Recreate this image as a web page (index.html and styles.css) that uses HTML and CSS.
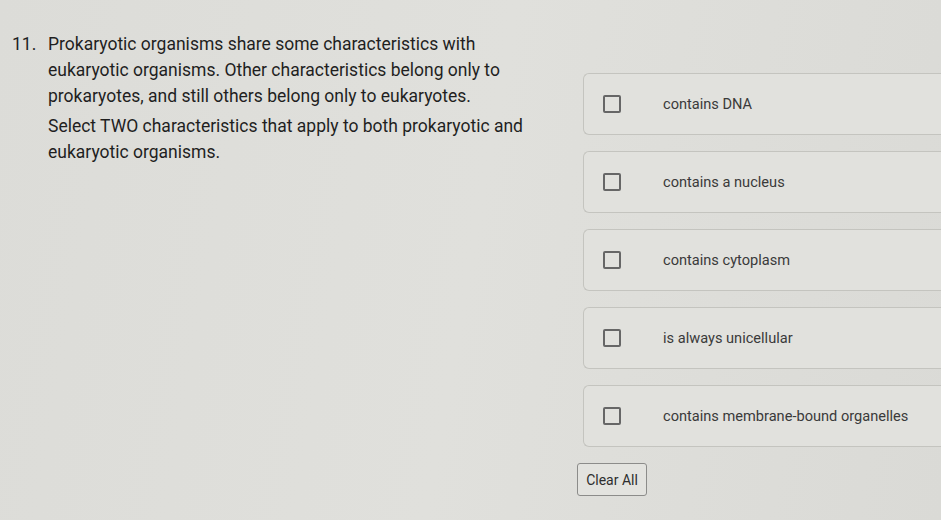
FILE: index.html
```html
<!DOCTYPE html>
<html>
<head>
<meta charset="utf-8">
<link rel="stylesheet" href="styles.css">
</head>
<body>
<div class="page">
  <div class="question">
    <div class="num">11.</div>
    <div class="qtext">
      <p class="para">Prokaryotic organisms share some characteristics with<br>eukaryotic organisms. Other characteristics belong only to<br>prokaryotes, and still others belong only to eukaryotes.</p>
      <p class="para second">Select TWO characteristics that apply to both prokaryotic and<br>eukaryotic organisms.</p>
    </div>
  </div>
  <div class="answers">
    <div class="option"><span class="box"></span><span class="label">contains DNA</span></div>
    <div class="option"><span class="box"></span><span class="label">contains a nucleus</span></div>
    <div class="option"><span class="box"></span><span class="label">contains cytoplasm</span></div>
    <div class="option"><span class="box"></span><span class="label">is always unicellular</span></div>
    <div class="option"><span class="box"></span><span class="label">contains membrane-bound organelles</span></div>
    <div class="actions"><button class="clear">Clear All</button></div>
  </div>
</div>
</body>
</html>
```
FILE: styles.css
```css
html, body {
  margin: 0;
  padding: 0;
  width: 941px;
  height: 520px;
  overflow: hidden;
}
body {
  background: linear-gradient(100deg, #dcdcd8 0%, #e0e0dc 50%, #dadad6 100%);
  font-family: Roboto, "Liberation Sans", sans-serif;
  color: #1f1f1f;
}
.page {
  display: flex;
  padding-left: 12px;
}
.question {
  display: flex;
  width: 571px;
  padding-top: 31px;
  font-size: 17.5px;
  line-height: 26px;
  flex-shrink: 0;
}
.num {
  width: 36px;
}
.para {
  margin: 0;
}
.second {
  margin-top: 4px;
}
.answers {
  padding-top: 73px;
  display: flex;
  flex-direction: column;
  gap: 16px;
  width: 358px;
  flex-shrink: 0;
}
.option {
  height: 62px;
  box-sizing: border-box;
  border: 1px solid #c4c4bf;
  border-right: none;
  border-radius: 6px 0 0 6px;
  background: #e1e1dd;
  display: flex;
  align-items: center;
  padding-left: 19px;
  font-size: 14.6px;
  color: #3a3a3a;
}
.box {
  width: 18px;
  height: 18px;
  box-sizing: border-box;
  border: 2px solid #666;
  border-radius: 2px;
  margin-right: 42px;
  flex-shrink: 0;
}
.actions {
  display: flex;
}
.clear {
  width: 70px;
  height: 33px;
  border: 1px solid #8c8c8a;
  border-radius: 3px;
  background: #e3e3df;
  font-family: Roboto, "Liberation Sans", sans-serif;
  font-size: 14px;
  color: #2e2e2e;
  padding: 0;
  margin-left: -6px;
}
```
